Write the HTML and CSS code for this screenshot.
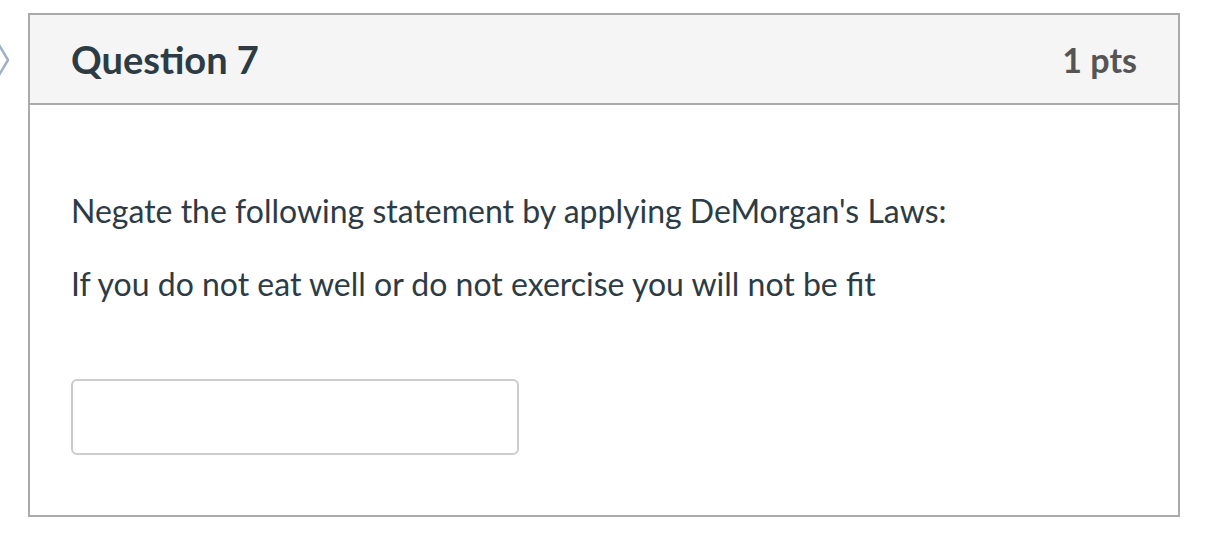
FILE: index.html
```html
<!DOCTYPE html>
<html>
<head>
<meta charset="utf-8">
<link rel="stylesheet" href="styles.css">
</head>
<body>
<div class="page">
  <svg class="chevron" width="14" height="40" viewBox="0 0 14 40"><path d="M1 5 L10 20 L1 35" fill="none" stroke="#9fb3c6" stroke-width="2.5" stroke-linejoin="round"/></svg>
  <div class="card">
    <div class="card-header">
      <h2 class="title">Question 7</h2>
      <div class="pts">1 pts</div>
    </div>
    <div class="card-body">
      <p class="text first">Negate the following statement by applying DeMorgan's Laws:</p>
      <p class="text">If you do not eat well or do not exercise you will not be fit</p>
      <div class="answer"></div>
    </div>
  </div>
</div>
</body>
</html>
```
FILE: styles.css
```css
html, body { margin: 0; padding: 0; background: #fff; }
body { font-family: Lato, "Open Sans", sans-serif; color: #2d3b45; }
.page { position: relative; padding: 13px 0 0 28px; width: 1152px; }
.chevron { position: absolute; left: -2px; top: 40px; }
.card { border: 2px solid #aaaaaa; background: #fff; }
.card-header {
  height: 90px; box-sizing: border-box; background: #f5f5f5; border-bottom: 2px solid #aaaaaa;
  display: flex; align-items: center; justify-content: space-between;
  padding: 0 41px 0 41px;
}
.title { margin: 0; font-size: 38px; font-weight: 700; color: #2d3b45; }
.pts { font-size: 34px; font-weight: 700; color: #555; }
.card-body { padding: 69px 41px 0 41px; height: 410px; box-sizing: border-box; }
.text { margin: 0; font-size: 32px; line-height: 73px; }
.answer { margin-top: 59px; width: 448px; height: 76px; box-sizing: border-box; border: 2px solid #cccccc; border-radius: 6px; }
```
